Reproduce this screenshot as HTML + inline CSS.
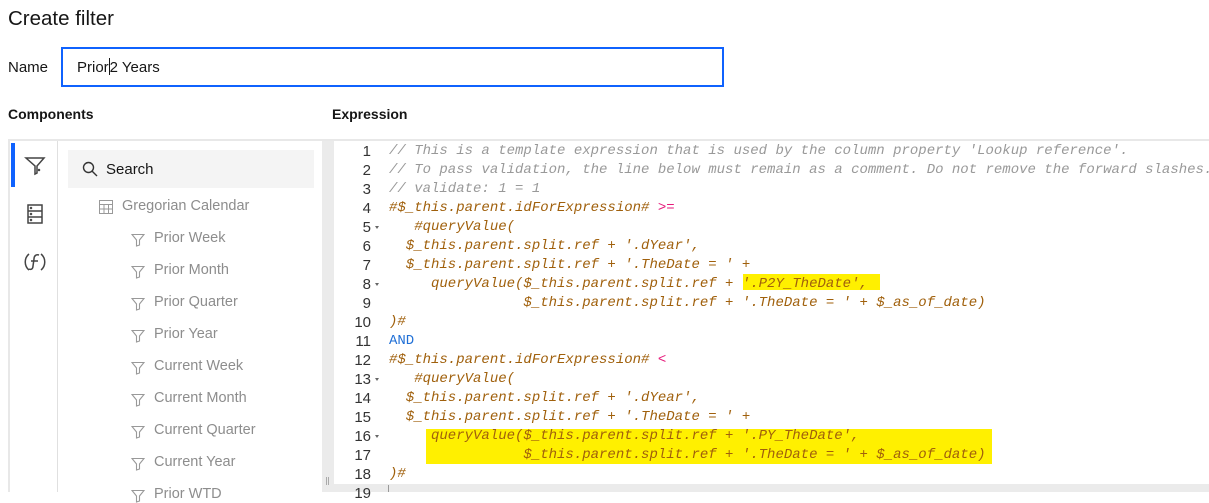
<!DOCTYPE html>
<html><head><meta charset="utf-8">
<style>
*{margin:0;padding:0;box-sizing:border-box}
body{width:1209px;height:492px;overflow:hidden;background:#fff;font-family:"Liberation Sans",sans-serif;color:#161616;position:relative}
.abs{position:absolute}
h1{position:absolute;left:8px;top:7px;font-size:20.5px;font-weight:400;color:#161616}
.code{font-family:"Liberation Mono",monospace;font-size:14px;font-style:italic;color:#a0600c;white-space:pre;line-height:19px}
.ln{font-family:"Liberation Sans",sans-serif;font-size:15px;color:#333;text-align:right;width:39px;line-height:19px}
.cm{color:#999}
.item{position:absolute;font-size:14.5px;color:#8d8d8d}
</style></head><body>
<h1>Create filter</h1>
<div class="abs" style="left:8px;top:59px;font-size:15px">Name</div>
<div class="abs" style="left:61px;top:47px;width:663px;height:40px;border:2px solid #0f62fe;background:#fff"></div>
<div class="abs" style="left:77px;top:58px;font-size:15px">Prior<span style="display:inline-block;width:1px;height:17px;background:#161616;vertical-align:-3px"></span>2 Years</div>
<div class="abs" style="left:8px;top:106px;font-size:14px;font-weight:700">Components</div>
<div class="abs" style="left:332px;top:106px;font-size:14px;font-weight:700">Expression</div>

<div class="abs" style="left:8px;top:139px;width:1201px;height:353px;border-top:2px solid #e8e8e8;border-left:2px solid #e8e8e8"></div>
<div class="abs" style="left:57px;top:141px;width:1px;height:351px;background:#e0e0e0"></div>
<div class="abs" style="left:11px;top:143px;width:4px;height:44px;background:#0f62fe"></div>
<svg class="abs" style="left:24px;top:155px" width="22" height="22" viewBox="0 0 22 22" fill="none" stroke="#444" stroke-width="1.5"><path d="M2 3h18l-7 8v7l-2 1v-8z"/><circle cx="15" cy="15" r="0.5" fill="#444"/></svg>
<svg class="abs" style="left:26px;top:204px" width="18" height="20" viewBox="0 0 18 20" fill="none" stroke="#444" stroke-width="1.5"><rect x="2" y="1" width="14" height="18"/><path d="M2 7h14M2 13h14"/><circle cx="5" cy="4" r=".5"/><circle cx="5" cy="10" r=".5"/><circle cx="5" cy="16" r=".5"/></svg>
<svg class="abs" style="left:23px;top:250px" width="24" height="24" viewBox="0 0 24 24" fill="none" stroke="#444" stroke-width="1.5"><path d="M6 4C1 8 1 16 6 20M18 4c5 4 5 12 0 16"/><path d="M16 5c-3-1-5 1-5 4l-1 7c0 3-2 4-4 3M8 11h7"/></svg>
<div class="abs" style="left:68px;top:150px;width:246px;height:38px;background:#f4f4f4"></div>
<svg class="abs" style="left:82px;top:161px" width="16" height="16" viewBox="0 0 16 16" fill="none" stroke="#333" stroke-width="1.4"><circle cx="6.5" cy="6.5" r="5"/><path d="M10.2 10.2L15 15"/></svg>
<div class="abs" style="left:106px;top:161px;font-size:15px;color:#161616">Search</div>
<svg class="abs" style="left:99px;top:200px" width="14" height="14" viewBox="0 0 14 14" fill="none" stroke="#999" stroke-width="1"><rect x=".5" y=".5" width="13" height="13"/><path d="M.5 4.5h13M.5 9h13M5 4.5v9M9.5 4.5v9"/></svg>
<div class="item" style="left:122px;top:198px">Gregorian Calendar</div>
<div id="items"></div>
<script>
var names=["Prior Week","Prior Month","Prior Quarter","Prior Year","Current Week","Current Month","Current Quarter","Current Year","Prior WTD"];
var h="";
names.forEach(function(n,i){var y=230+i*32;
h+='<svg class="abs" style="left:131px;top:'+(y+3)+'px" width="14" height="14" viewBox="0 0 14 14" fill="none" stroke="#999" stroke-width="1.1"><path d="M1 1.5h12l-4.5 5.5v5l-3 1v-6z"/></svg>';
h+='<div class="item" style="left:154px;top:'+y+'px">'+n+'</div>';});
document.getElementById('items').innerHTML=h;
</script>
<div class="abs" style="left:322px;top:141px;width:12px;height:351px;background:#ebebeb"></div>
<div class="abs" style="left:326px;top:477px;width:1px;height:8px;background:#aaa"></div>
<div class="abs" style="left:328px;top:477px;width:1px;height:8px;background:#aaa"></div>
<div class="abs" style="left:334px;top:484px;width:875px;height:8px;background:#ebebeb"></div>
<div class="abs" style="left:743px;top:274px;width:137px;height:16px;background:#fff000"></div>
<div class="abs" style="left:426px;top:429px;width:566px;height:35px;background:#fff000"></div>
<div id="code"></div>
<script>
var L=[
['<span class="cm">// This is a template expression that is used by the column property \'Lookup reference\'.</span>'],
['<span class="cm">// To pass validation, the line below must remain as a comment. Do not remove the forward slashes.</span>'],
['<span class="cm">// validate: 1 = 1</span>'],
['#$_this.parent.idForExpression# <span style="color:#e6197a;font-style:normal">&gt;=</span>'],
['   #queryValue(',1],
['  $_this.parent.split.ref + \'.dYear\','],
['  $_this.parent.split.ref + \'.TheDate = \' +'],
['     queryValue($_this.parent.split.ref + \'.P2Y_TheDate\',',1],
['                $_this.parent.split.ref + \'.TheDate = \' + $_as_of_date)'],
[')#'],
['<span style="color:#1f6fd6;font-style:normal">AND</span>'],
['#$_this.parent.idForExpression# <span style="color:#e6197a;font-style:normal">&lt;</span>'],
['   #queryValue(',1],
['  $_this.parent.split.ref + \'.dYear\','],
['  $_this.parent.split.ref + \'.TheDate = \' +'],
['     queryValue($_this.parent.split.ref + \'.PY_TheDate\',',1],
['                $_this.parent.split.ref + \'.TheDate = \' + $_as_of_date)'],
[')#'],
['']
];
var h="";
L.forEach(function(l,i){var y=142+i*19;
h+='<div class="abs ln" style="left:332px;top:'+y+'px">'+(i+1)+'</div>';
if(l[1])h+='<div class="abs" style="left:375px;top:'+(y+8)+'px;width:0;height:0;border-left:2.5px solid transparent;border-right:2.5px solid transparent;border-top:3px solid #666"></div>';
h+='<div class="abs code" style="left:389px;top:'+y+'px">'+l[0]+'</div>';});
document.getElementById('code').innerHTML=h;
</script>
<div class="abs" style="left:388px;top:485px;width:1px;height:7px;background:#999"></div>
</body></html>
